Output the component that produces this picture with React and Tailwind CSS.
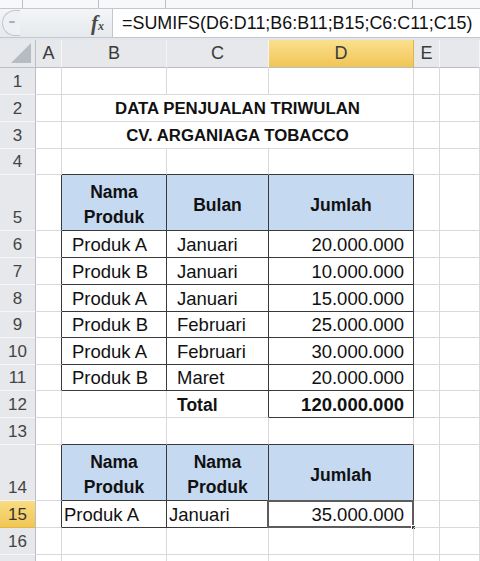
const cols = ['A', 'B', 'C', 'D', 'E', 'F'];
const colWidth = {
  A: 'w-[26px] shrink-0',
  B: 'w-[105px] shrink-0',
  C: 'w-[102px] shrink-0',
  D: 'w-[145px] shrink-0',
  E: 'w-[26px] shrink-0',
  F: 'flex-1',
};

const rows = [
  { n: 1, h: 'h-[27px]' },
  { n: 2, h: 'h-[27px]', title: 'DATA PENJUALAN TRIWULAN' },
  { n: 3, h: 'h-[27px]', title: 'CV. ARGANIAGA TOBACCO' },
  { n: 4, h: 'h-[26px]' },
  { n: 5, h: 'h-[56px]', head: [['Nama', 'Produk'], ['Bulan'], ['Jumlah']] },
  { n: 6, h: 'h-[27px]', data: ['Produk A', 'Januari', '20.000.000'] },
  { n: 7, h: 'h-[27px]', data: ['Produk B', 'Januari', '10.000.000'] },
  { n: 8, h: 'h-[27px]', data: ['Produk A', 'Januari', '15.000.000'] },
  { n: 9, h: 'h-[26px]', data: ['Produk B', 'Februari', '25.000.000'] },
  { n: 10, h: 'h-[27px]', data: ['Produk A', 'Februari', '30.000.000'] },
  { n: 11, h: 'h-[26px]', data: ['Produk B', 'Maret', '20.000.000'] },
  { n: 12, h: 'h-[27px]', total: true },
  { n: 13, h: 'h-[27px]' },
  { n: 14, h: 'h-[56px]', head: [['Nama', 'Produk'], ['Nama', 'Produk'], ['Jumlah']] },
  { n: 15, h: 'h-[27px]', result: ['Produk A', 'Januari', '35.000.000'] },
  { n: 16, h: 'h-[27px]' },
  // only the top edge of row 17 is in view
  { n: 17, h: 'h-[27px]', hideNumber: true },
];

// cells that carry the dark table border
const boxed = (n, col) => {
  if (!['B', 'C', 'D'].includes(col)) return false;
  if (n >= 5 && n <= 11) return true;
  if (n === 12) return col === 'D';
  if (n === 14 || n === 15) return true;
  return false;
};

const nextCol = (col) => cols[cols.indexOf(col) + 1];

const CellText = ({ row, col }) => {
  const i = ['B', 'C', 'D'].indexOf(col);
  if (row.head && i >= 0) {
    return (
      <div className="flex h-full w-full flex-col items-center justify-center bg-[#c5d9f1] pt-[5px] text-[17.5px] font-bold leading-[25px]">
        {row.head[i].map((line) => (
          <span key={line}>{line}</span>
        ))}
      </div>
    );
  }
  if (row.data && i >= 0) {
    return (
      <div
        className={`flex h-full w-full items-end text-[18.5px] leading-[24px] ${
          col === 'D' ? 'justify-end pr-[9px]' : 'pl-[10px]'
        }`}
      >
        {row.data[i]}
      </div>
    );
  }
  if (row.result && i >= 0) {
    return (
      <div
        className={`flex h-full w-full items-end text-[18.5px] leading-[24px] ${
          col === 'D' ? 'justify-end pr-[9px]' : 'pl-[2px]'
        }`}
      >
        {row.result[i]}
      </div>
    );
  }
  if (row.total && col === 'C') {
    return (
      <div className="flex h-full w-full items-end pl-[10px] text-[17.5px] font-bold leading-[24px]">
        Total
      </div>
    );
  }
  if (row.total && col === 'D') {
    return (
      <div className="flex h-full w-full items-end justify-end pr-[9px] text-[18.5px] font-bold leading-[24px]">
        120.000.000
      </div>
    );
  }
  return null;
};

const SheetRow = ({ row }) => {
  const next = rows.find((r) => r.n === row.n + 1);
  const selected = row.n === 15;

  const renderCell = (col) => {
    const right = boxed(row.n, col) || boxed(row.n, nextCol(col));
    const bottom = boxed(row.n, col) || (next && boxed(next.n, col));
    return (
      <div
        key={col}
        className={`relative border-r border-b ${colWidth[col]} ${
          right ? 'border-r-[#3a3a3a]' : 'border-r-[#d9d9d9]'
        } ${bottom ? 'border-b-[#3a3a3a]' : 'border-b-[#d9d9d9]'}`}
      >
        <CellText row={row} col={col} />
        {selected && col === 'D' && (
          <>
            <div className="absolute -top-px -left-[2px] -right-px -bottom-px border-2 border-[#5c5c5c]" />
            <div className="absolute -right-[3px] -bottom-[3px] h-[5px] w-[5px] border border-white bg-[#3a3a3a]" />
          </>
        )}
      </div>
    );
  };

  return (
    <div className={`flex ${row.h}`}>
      <div
        className={`flex w-[36px] shrink-0 items-end justify-center border-r border-b border-r-[#b9bec5] text-[17px] leading-[24px] ${
          selected
            ? 'bg-gradient-to-b from-[#f9dc83] to-[#f1c653] border-b-[#e2b647] text-[#333]'
            : 'bg-[#e6e8eb] border-b-[#f4f5f7] text-[#444]'
        }`}
      >
        {row.hideNumber ? '' : row.n}
      </div>
      {renderCell('A')}
      {row.title ? (
        <div className="flex w-[352px] shrink-0 items-end justify-center border-r border-b border-[#d9d9d9] text-[16.8px] font-bold leading-[24px]">
          {row.title}
        </div>
      ) : (
        ['B', 'C', 'D'].map(renderCell)
      )}
      {renderCell('E')}
      {renderCell('F')}
    </div>
  );
};

const FormulaBar = () => (
  <div className="flex h-[40px] flex-col bg-[#e3e7ec]">
    <div className="flex h-[9px] border-b border-[#c3c8ce] bg-[#f7f8fa]">
      <div className="w-[23px] border-r border-[#bcc1c7]" />
      <div className="w-[76px] border-r border-[#bcc1c7]" />
      <div className="w-[67px] border-r border-[#bcc1c7]" />
      <div className="w-[247px] border-r border-[#bcc1c7]" />
    </div>
    <div className="flex h-[29px] border-b border-[#c3c8ce]">
      <div className="flex w-[112px] shrink-0 items-center bg-gradient-to-b from-[#f3f5f7] to-[#e6e9ed] pr-[8px]">
        <div className="ml-[2px] flex h-[26px] w-[18px] items-center justify-center rounded-l-full border border-r-0 border-[#c2c7cd] bg-[#eef0f3]">
          <span className="mt-[-3px] h-[2px] w-[6px] rounded bg-[#aab0b7]" />
        </div>
        <div className="flex-1" />
        <span className="font-['Liberation_Serif',serif] text-[21px] font-bold italic leading-none text-[#4a4a4a]">
          f<span className="text-[12px]">x</span>
        </span>
      </div>
      <div className="flex flex-1 items-center border-l border-[#c3c8ce] bg-white pl-[9px] text-[17.9px] text-[#111]">
        =SUMIFS(D6:D11;B6:B11;B15;C6:C11;C15)
      </div>
    </div>
  </div>
);

const ColumnHeader = () => (
  <div className="flex h-[28px] text-[18px] text-[#3a3a3a]">
    <div className="relative w-[36px] shrink-0 border-r border-b border-[#b9bec5] bg-[#e6e8eb]">
      <svg className="absolute right-[4px] bottom-[4px]" width="20" height="20" viewBox="0 0 20 20">
        <polygon points="20,0 20,20 0,20" fill="#b7bcc2" />
      </svg>
    </div>
    {cols.map((col) => (
      <div
        key={col}
        className={`flex items-center justify-center border-r border-b border-b-[#b9bec5] ${colWidth[col]} ${
          col === 'D'
            ? 'bg-gradient-to-b from-[#fbe08d] to-[#f1c553] border-r-[#e0b54a]'
            : 'bg-[#e6e8eb] border-r-[#f4f5f7]'
        }`}
      >
        {col === 'F' ? '' : col}
      </div>
    ))}
  </div>
);

export default function App() {
  return (
    <div className="h-[561px] w-[480px] overflow-hidden bg-white font-['Liberation_Sans',Arial,sans-serif] text-[#111]">
      <FormulaBar />
      <ColumnHeader />
      {rows.map((row) => (
        <SheetRow key={row.n} row={row} />
      ))}
    </div>
  );
}
